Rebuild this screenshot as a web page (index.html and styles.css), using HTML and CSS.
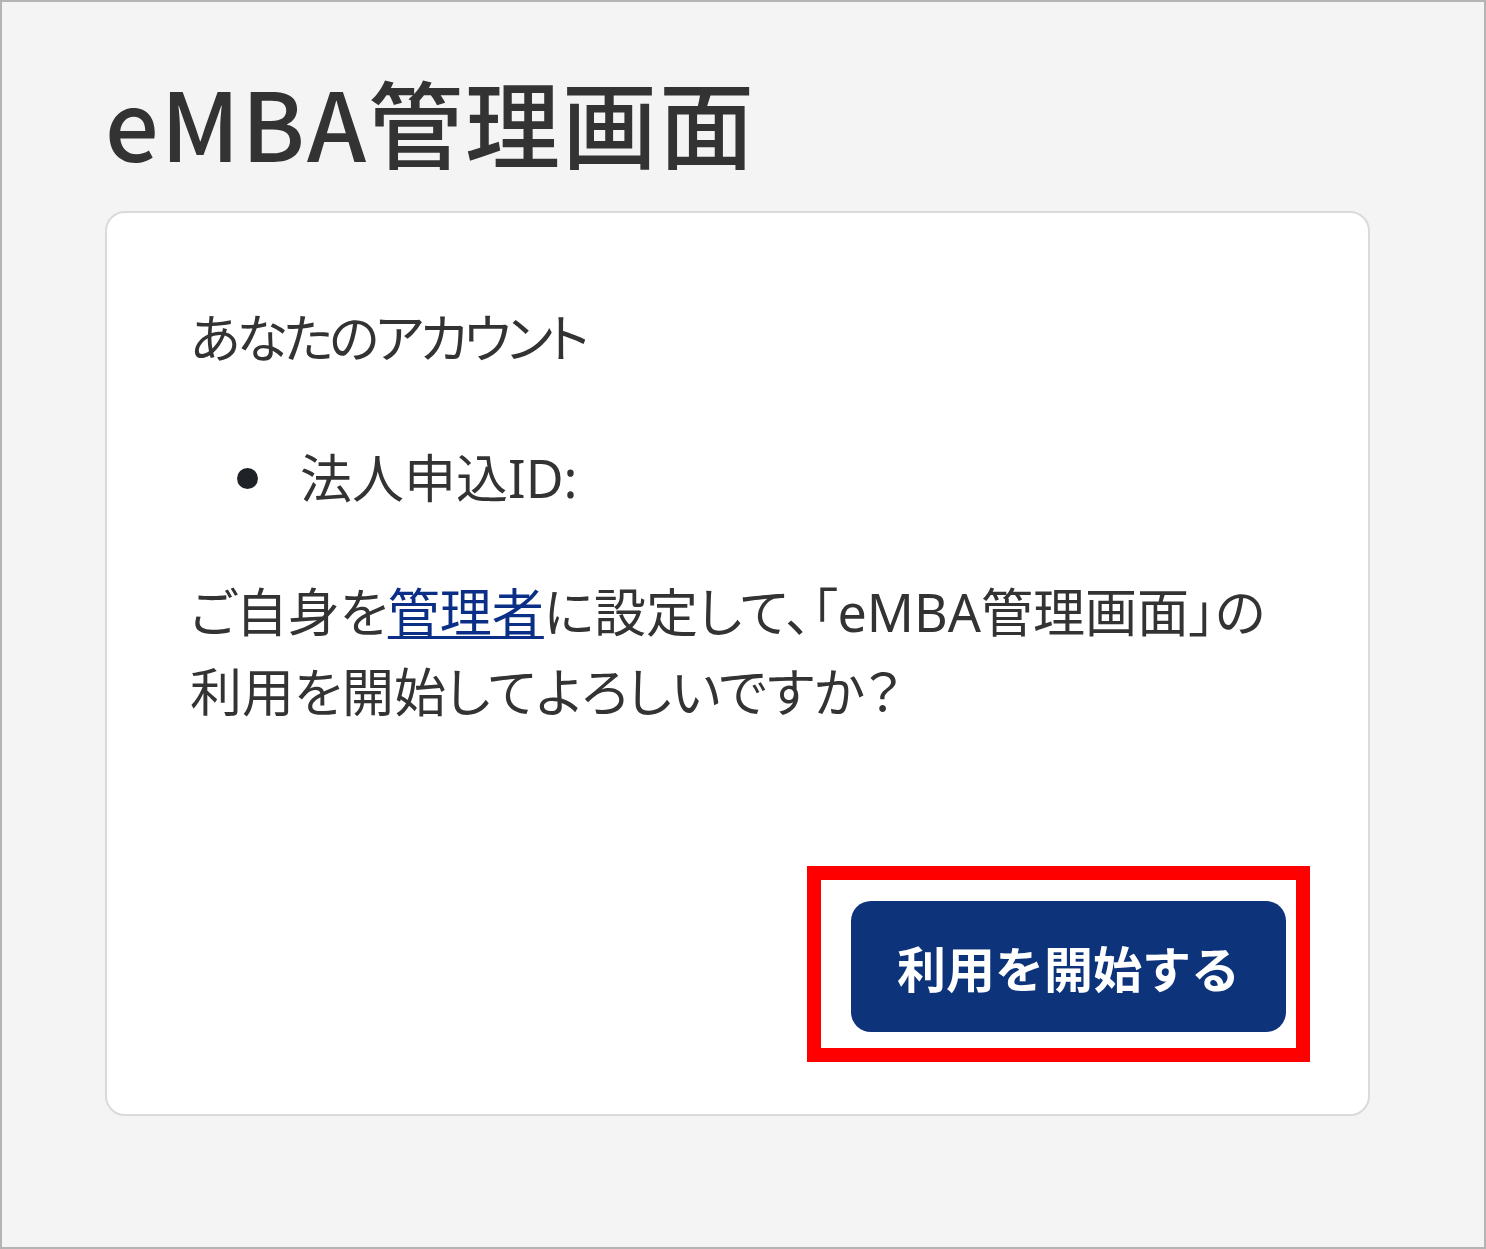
FILE: index.html
```html
<!DOCTYPE html>
<html lang="ja">
<head>
<meta charset="utf-8">
<title>eMBA管理画面</title>
<link rel="stylesheet" href="styles.css">
</head>
<body>
<div class="frame">
  <h1 class="title">eMBA管理画面</h1>
  <div class="card">
    <p class="intro">あなたのアカウント</p>
    <ul class="info">
      <li class="info-item">法人申込ID:</li>
    </ul>
    <p class="question">ご自身を<a class="link" href="#">管理者</a>に設定して、「eMBA管理画面」の<br>利用を開始してよろしいですか？</p>
    <div class="actions">
      <div class="action-wrap">
        <button class="btn-primary" type="button">利用を開始する</button>
        <span class="highlight"></span>
      </div>
    </div>
  </div>
</div>
</body>
</html>
```

FILE: styles.css
```css
* { box-sizing: border-box; }

html, body {
  margin: 0;
  padding: 0;
}

body {
  font-family: "Noto Sans", "Noto Sans CJK JP", sans-serif;
  color: #333333;
  background: #f4f4f4;
}

.frame {
  width: 1486px;
  height: 1249px;
  border: 2px solid #b4b4b4;
  background: #f4f4f4;
  padding: 62px 0 0 103px;
}

.title {
  margin: 0;
  font-size: 95px;
  line-height: 113px;
  font-weight: 500;
  color: #333333;
  font-family: "Noto Sans CJK JP", sans-serif;
  letter-spacing: 2px;
}

.card {
  margin-top: 34px;
  width: 1265px;
  background: #ffffff;
  border: 2px solid #dadada;
  border-radius: 20px;
  padding: 85px 82px 82px 83px;
  font-size: 52px;
  line-height: 80px;
  font-feature-settings: "palt";
}

.intro {
  margin: 0;
  letter-spacing: -4px;
}

.info {
  list-style: none;
  margin: 60px 0 0;
  padding: 0 0 0 47px;
}

.info-item {
  display: flex;
  align-items: center;
}

.info-item::before {
  content: "";
  width: 21px;
  height: 21px;
  border-radius: 50%;
  background: #1f2328;
  margin-right: 42px;
  flex: none;
}

.question {
  margin: 54px 0 0;
}

.link {
  color: #0b2f86;
  text-decoration: underline;
  text-decoration-thickness: 3px;
  text-underline-offset: 4px;
}

.actions {
  display: flex;
  justify-content: flex-end;
  margin-top: 169px;
}

.action-wrap {
  position: relative;
  display: flex;
}

.btn-primary {
  height: 131px;
  padding: 0 46px;
  border: none;
  border-radius: 20px;
  background: #0d337a;
  color: #ffffff;
  font-family: "Noto Sans CJK JP", sans-serif;
  font-size: 49px;
  font-weight: 700;
  font-feature-settings: normal;
  line-height: 1;
  cursor: pointer;
}

.highlight {
  position: absolute;
  left: -44px;
  top: -35px;
  right: -24px;
  bottom: -30px;
  border: 14px solid #ff0000;
  pointer-events: none;
}
```
